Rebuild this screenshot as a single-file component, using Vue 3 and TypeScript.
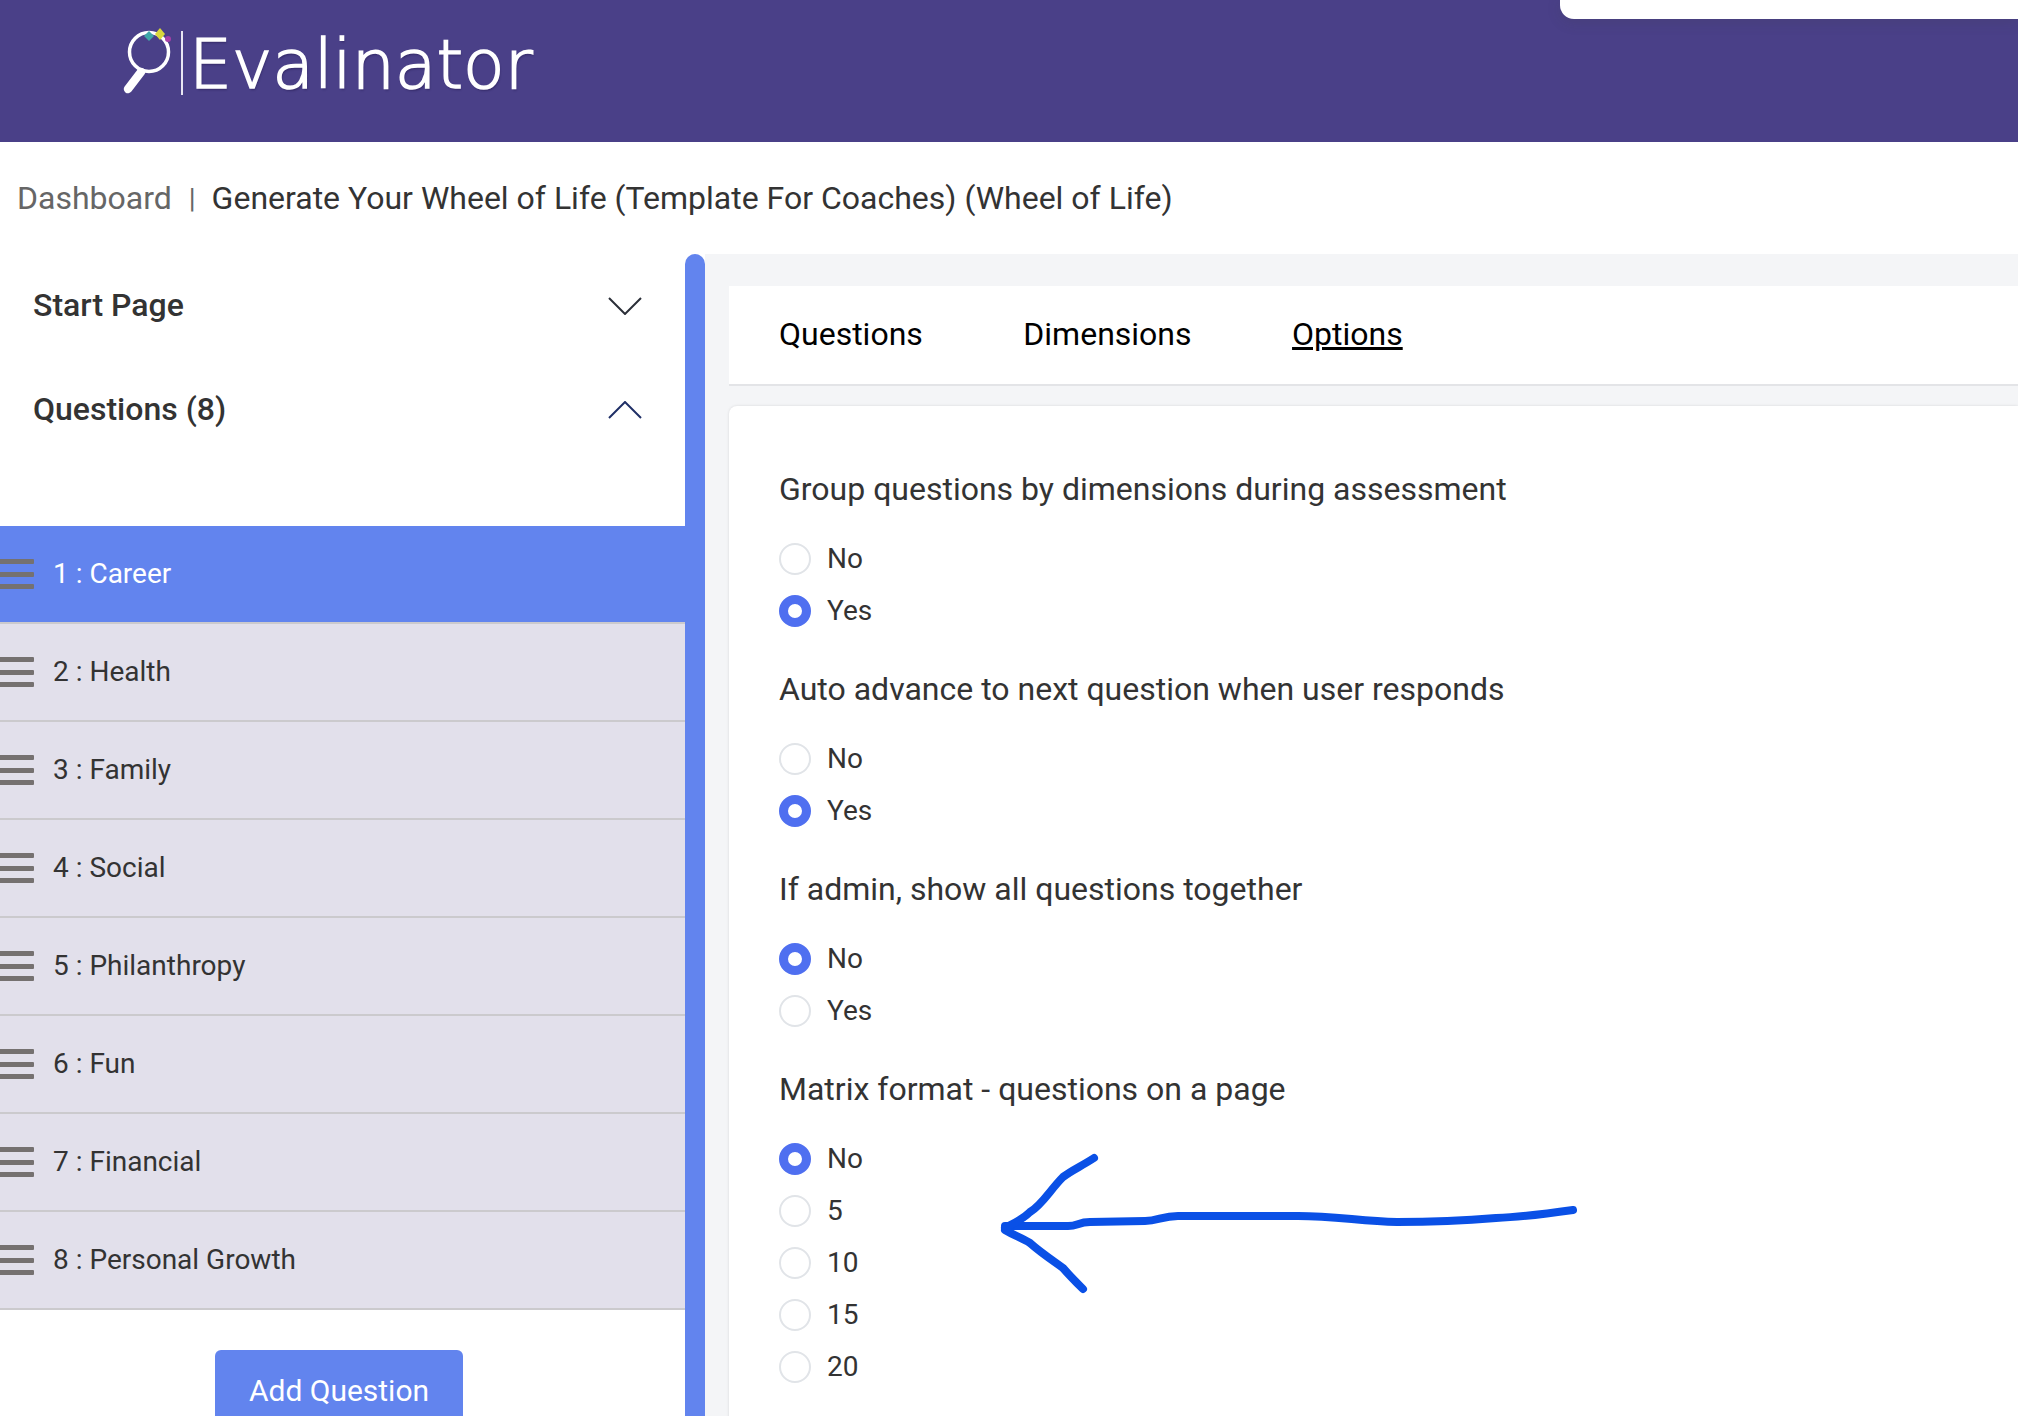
<script setup lang="ts">
interface Group { title: string; options: string[]; selected: string }
const items: string[] = ['1 : Career', '2 : Health', '3 : Family', '4 : Social', '5 : Philanthropy', '6 : Fun', '7 : Financial', '8 : Personal Growth']
const groups: Group[] = [
  { title: 'Group questions by dimensions during assessment', options: ['No', 'Yes'], selected: 'Yes' },
  { title: 'Auto advance to next question when user responds', options: ['No', 'Yes'], selected: 'Yes' },
  { title: 'If admin, show all questions together', options: ['No', 'Yes'], selected: 'No' },
  { title: 'Matrix format - questions on a page', options: ['No', '5', '10', '15', '20'], selected: 'No' },
]
</script>

<template>
  <div class="page">
    <header class="topbar">
      <div class="logo">
        <svg class="mark" width="60" height="70" viewBox="0 0 60 70" aria-hidden="true">
          <circle cx="29" cy="24" r="19.5" fill="none" stroke="#fff" stroke-width="3.5" />
          <path d="M21 44 L8 61" stroke="#fff" stroke-width="8.5" stroke-linecap="round" />
          <path d="M29 3 l5 5 -5 5 -5 -5z" fill="#3fa7a8" />
          <path d="M40 0 l5 6 -5 6 -5 -6z" fill="#d9d83c" />
          <circle cx="48" cy="11" r="3" fill="#a63fa8" />
        </svg>
        <span class="divider"></span>
        <span class="wordmark">Evalinator</span>
      </div>
      <div class="search-tab"></div>
    </header>

    <nav class="crumbs">
      <span class="crumb-link">Dashboard</span>
      <span class="crumb-sep">|</span>
      <span class="crumb-title">Generate Your Wheel of Life (Template For Coaches) (Wheel of Life)</span>
    </nav>

    <main class="workspace">
      <aside class="sidebar">
        <div class="acc-row">
          <span class="acc-label">Start Page</span>
          <svg width="34" height="18" viewBox="0 0 34 18"><path d="M1 1 L17 17 L33 1" fill="none" stroke="#2b2f38" stroke-width="2" /></svg>
        </div>
        <div class="acc-row">
          <span class="acc-label">Questions (8)</span>
          <svg width="34" height="18" viewBox="0 0 34 18"><path d="M1 17 L17 1 L33 17" fill="none" stroke="#1f2f66" stroke-width="2" /></svg>
        </div>
        <ul class="list">
          <li v-for="(item, i) in items" :key="item" class="list-row" :class="{ active: i === 0 }">
            <span class="handle"><i></i><i></i><i></i></span>
            <span class="row-label">{{ item }}</span>
          </li>
        </ul>
        <div class="add-wrap">
          <button class="add-btn" type="button">Add Question</button>
        </div>
      </aside>
      <div class="rail"></div>

      <section class="content">
        <div class="tabs">
          <span class="tab">Questions</span>
          <span class="tab">Dimensions</span>
          <span class="tab current">Options</span>
        </div>
        <div class="panel">
          <div v-for="g in groups" :key="g.title" class="group">
            <div class="group-title">{{ g.title }}</div>
            <div v-for="o in g.options" :key="o" class="radio-row">
              <span class="radio" :class="{ on: o === g.selected }"></span>
              <span>{{ o }}</span>
            </div>
          </div>
        </div>
      </section>
    </main>

    <svg class="annotation" width="600" height="160" viewBox="990 1145 600 160" aria-hidden="true">
      <g fill="none" stroke="#0a50e6" stroke-width="8" stroke-linecap="round" stroke-linejoin="round">
        <path d="M1573 1210 C1545 1214 1520 1217 1496 1218 C1460 1221 1430 1222 1397 1222 C1360 1221 1335 1216 1298 1216 L1178 1216 C1162 1216 1158 1221 1145 1221 L1090 1222 C1078 1222 1078 1226 1068 1226 L1005 1226" />
        <path d="M1094 1158 C1080 1167 1072 1170 1063 1177 C1050 1190 1042 1205 1030 1212 C1022 1220 1012 1224 1005 1228" />
        <path d="M1005 1230 C1015 1236 1022 1238 1030 1243 C1040 1252 1052 1260 1063 1268 C1070 1276 1076 1282 1083 1289" />
      </g>
    </svg>
  </div>
</template>

<style>
html, body { margin: 0; padding: 0; background: #fff; }
</style>

<style scoped>
.page {
  position: relative;
  width: 2018px;
  height: 1416px;
  overflow: hidden;
  font-family: Roboto, "Liberation Sans", sans-serif;
  color: #333;
  background: #fff;
}
.topbar {
  position: relative;
  height: 142px;
  background: #4a4088;
}
.logo {
  display: flex;
  align-items: flex-start;
  padding: 28px 0 0 120px;
  color: #fff;
}
.mark { display: block; flex: none; }
.divider {
  width: 2px;
  height: 64px;
  margin: 3px 6px 0 1px;
  background: #e8e6f2;
  flex: none;
}
.wordmark {
  font-family: "DejaVu Sans", "Open Sans", sans-serif;
  font-size: 68px;
  font-weight: 200;
  line-height: 74px;
  color: #fff;
  -webkit-text-stroke: 1.6px #fff;
  text-shadow: 1px 2px 2px rgba(30, 20, 70, 0.45);
}
.search-tab {
  position: absolute;
  top: 0;
  right: 0;
  width: 458px;
  height: 19px;
  background: #fff;
  border-bottom-left-radius: 14px;
  box-shadow: 0 3px 14px rgba(60, 60, 60, 0.18);
}
.crumbs {
  display: flex;
  align-items: center;
  height: 112px;
  padding-left: 17px;
  font-size: 32px;
}
.crumb-link { color: #666; }
.crumb-sep { margin: 0 16px 0 17px; color: #666; font-size: 28px; }
.crumb-title { color: #333; }
.workspace {
  display: flex;
  height: 1162px;
}
.sidebar {
  width: 685px;
  flex: none;
}
.acc-row {
  display: flex;
  align-items: center;
  justify-content: space-between;
  height: 104px;
  padding: 0 43px 0 33px;
  font-size: 32px;
  font-weight: 500;
  color: #333;
}
.acc-label { margin-bottom: 2px; }
.list {
  list-style: none;
  margin: 64px 0 0;
  padding: 0;
}
.list-row {
  box-sizing: border-box;
  display: flex;
  align-items: center;
  gap: 19px;
  height: 98px;
  font-size: 28px;
  color: #333;
  background: #e2e0eb;
  border-bottom: 2px solid #cbcacd;
}
.row-label { margin-bottom: 2px; }
.list-row.active {
  color: #fff;
  background: #6284ee;
}
.handle {
  display: flex;
  flex-direction: column;
  gap: 7.5px;
  width: 34px;
  flex: none;
}
.handle i {
  display: block;
  height: 5px;
  background: #757170;
  border-radius: 0 1px 1px 0;
}
.add-wrap {
  display: flex;
  justify-content: center;
  padding: 40px 7px 0 0;
}
.add-btn {
  width: 248px;
  height: 80px;
  padding: 0;
  border: 0;
  border-radius: 6px;
  font-family: inherit;
  font-size: 30px;
  color: #fff;
  background: #6284ee;
}
.rail {
  width: 20px;
  flex: none;
  background: #6284ee;
  border-radius: 10px 10px 0 0;
}
.content {
  flex: 1;
  min-width: 0;
  padding: 32px 0 0 24px;
  background: #f4f5f7;
}
.tabs {
  box-sizing: content-box;
  display: flex;
  gap: 100.5px;
  align-items: center;
  height: 96px;
  padding: 0 0 2px 50px;
  background: #fff;
  border-bottom: 2px solid #e3e4e7;
  font-size: 32px;
  color: #000;
}
.tab.current { text-decoration: underline; }
.panel {
  margin-top: 20px;
  height: 1100px;
  padding: 64px 0 0 50px;
  background: #fff;
  border-radius: 8px 0 0 0;
  box-shadow: 0 0 3px rgba(0, 0, 0, 0.12);
}
.group { padding-bottom: 33.5px; }
.group-title {
  height: 40px;
  margin-bottom: 22.5px;
  font-size: 32px;
  line-height: 39px;
  color: #333;
}
.radio-row {
  display: flex;
  align-items: center;
  gap: 16px;
  height: 52px;
  font-size: 28px;
  color: #333;
}
.radio {
  box-sizing: border-box;
  width: 32px;
  height: 32px;
  border: 2px solid #e1e4e8;
  border-radius: 50%;
  background: #fff;
  flex: none;
}
.radio.on {
  border: 9px solid #4f6ff0;
}
.annotation {
  position: absolute;
  left: 990px;
  top: 1145px;
}
</style>
